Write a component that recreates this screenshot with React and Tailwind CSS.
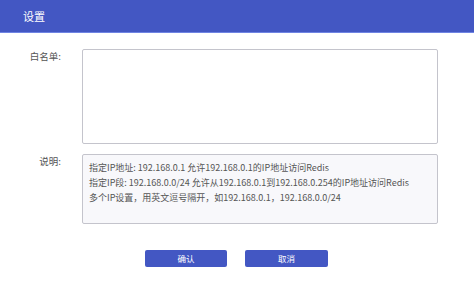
export default function App() {
  const font = { fontFamily: '"Noto Sans CJK SC", "Noto Sans", sans-serif' };
  return (
    <div className="w-[474px] h-[290px] bg-white overflow-hidden" style={font}>
      <div className="h-[33px] bg-[#4357c3] border-b border-[#6f84e3] flex items-center pl-[23px]">
        <span className="text-[11px] text-white leading-none">设置</span>
      </div>
      <div className="flex mt-[16px]">
        <div className="w-[82px] pr-[21px] text-right text-[9.5px] text-[#555] pt-[0px] leading-[14px]">白名单:</div>
        <div className="w-[356px] h-[95px] border border-[#c4c4cc] rounded-[2px] bg-white"></div>
      </div>
      <div className="flex mt-[10px]">
        <div className="w-[82px] pr-[21px] text-right text-[9.5px] text-[#555] pt-[0px] leading-[14px]">说明:</div>
        <div className="w-[356px] h-[70px] border border-[#c4c4cc] rounded-[2px] bg-[#f8f8fb] pl-[6px] pt-[5px] text-[9px] text-[#555] leading-[15px]">
          <div>指定IP地址: 192.168.0.1 允许192.168.0.1的IP地址访问Redis</div>
          <div>指定IP段: 192.168.0.0/24 允许从192.168.0.1到192.168.0.254的IP地址访问Redis</div>
          <div>多个IP设置，用英文逗号隔开，如192.168.0.1，192.168.0.0/24</div>
        </div>
      </div>
      <div className="flex mt-[26px] pl-[145px] gap-[18px]">
        <button className="w-[82px] h-[17px] bg-[#4357c3] rounded-[2px] text-white text-[8.5px] leading-none flex items-center justify-center">确认</button>
        <button className="w-[83px] h-[17px] bg-[#4357c3] rounded-[2px] text-white text-[8.5px] leading-none flex items-center justify-center">取消</button>
      </div>
    </div>
  );
}
